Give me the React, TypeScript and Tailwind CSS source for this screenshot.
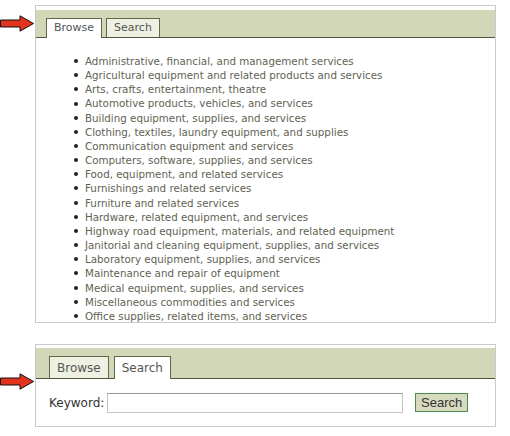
import React from 'react';

const categories = [
  'Administrative, financial, and management services',
  'Agricultural equipment and related products and services',
  'Arts, crafts, entertainment, theatre',
  'Automotive products, vehicles, and services',
  'Building equipment, supplies, and services',
  'Clothing, textiles, laundry equipment, and supplies',
  'Communication equipment and services',
  'Computers, software, supplies, and services',
  'Food, equipment, and related services',
  'Furnishings and related services',
  'Furniture and related services',
  'Hardware, related equipment, and services',
  'Highway road equipment, materials, and related equipment',
  'Janitorial and cleaning equipment, supplies, and services',
  'Laboratory equipment, supplies, and services',
  'Maintenance and repair of equipment',
  'Medical equipment, supplies, and services',
  'Miscellaneous commodities and services',
  'Office supplies, related items, and services',
];

const Arrow: React.FC<{ className?: string }> = ({ className }) => (
  <svg width="35" height="17" viewBox="0 0 35 17" className={className}>
    <polygon
      points="0.5,5 20,5 20,0.8 33.5,8.5 20,16.2 20,12 0.5,12"
      fill="#e2331f"
      stroke="#111"
      strokeWidth="1"
      strokeLinejoin="miter"
    />
  </svg>
);

const Tab: React.FC<{ label: string; active?: boolean; size: 'sm' | 'md' }> = ({ label, active, size }) => {
  const sm = size === 'sm';
  return (
    <div
      className={
        'flex items-center justify-center border border-[#5f6849] text-[#555] relative ' +
        (active ? 'bg-white border-b-0 -mb-px ' : 'bg-[#eef0e1] border-b-0 ') +
        (sm
          ? active ? 'h-[20px] px-[7px] text-[11px] pb-[1px]' : 'h-[19px] px-[7px] text-[11px]'
          : active ? 'h-[23px] px-[7px] text-[12px] pb-[1px]' : 'h-[22px] px-[7px] text-[12px]')
      }
    >
      {label}
    </div>
  );
};

export default function App() {
  return (
    <div className="w-[510px] h-[436px] bg-white overflow-hidden font-['DejaVu_Sans',Verdana,sans-serif]">
      {/* browse panel */}
      <div className="flex pt-[5px]">
        <Arrow className="mt-[10px] shrink-0" />
        <div className="w-[461px] h-[318px] border border-[#cacaca] pt-[4px] overflow-hidden">
          <div className="h-[28px] bg-[#d2d7b8] border-b border-[#4d573a] flex items-end gap-[4px] pl-[10px]">
            <Tab label="Browse" active size="sm" />
            <Tab label="Search" size="sm" />
          </div>
          <ul className="pt-[16px] pl-[38px] text-[10.3px] leading-[14.15px] text-[#606252]">
            {categories.map((c) => (
              <li key={c} className="flex items-center">
                <span className="w-[4px] h-[4px] rounded-full bg-[#222] mr-[7px] shrink-0" />
                <span className="whitespace-nowrap">{c}</span>
              </li>
            ))}
          </ul>
        </div>
      </div>

      {/* search panel */}
      <div className="flex mt-[21px]">
        <Arrow className="mt-[29px] shrink-0" />
        <div className="w-[461px] border border-[#cacaca] pt-[3px]">
          <div className="h-[31px] bg-[#d2d7b8] border-b border-[#4d573a] flex items-end gap-[5px] pl-[13px]">
            <Tab label="Browse" size="md" />
            <Tab label="Search" active size="md" />
          </div>
          <div className="h-[47px] flex items-center pl-[13px]">
            <span className="text-[12px] text-[#333] w-[58px]">Keyword:</span>
            <input
              type="text"
              className="w-[296px] h-[20px] border border-[#c4c4c4] border-t-[#9a9a9a] bg-white outline-none"
            />
            <button className="ml-[12px] h-[19px] px-[5px] bg-[#d6dabf] border border-[#4d8a4d] text-[13px] leading-none text-[#333] font-['Liberation_Sans',Arial,sans-serif]">
              Search
            </button>
          </div>
        </div>
      </div>
    </div>
  );
}
